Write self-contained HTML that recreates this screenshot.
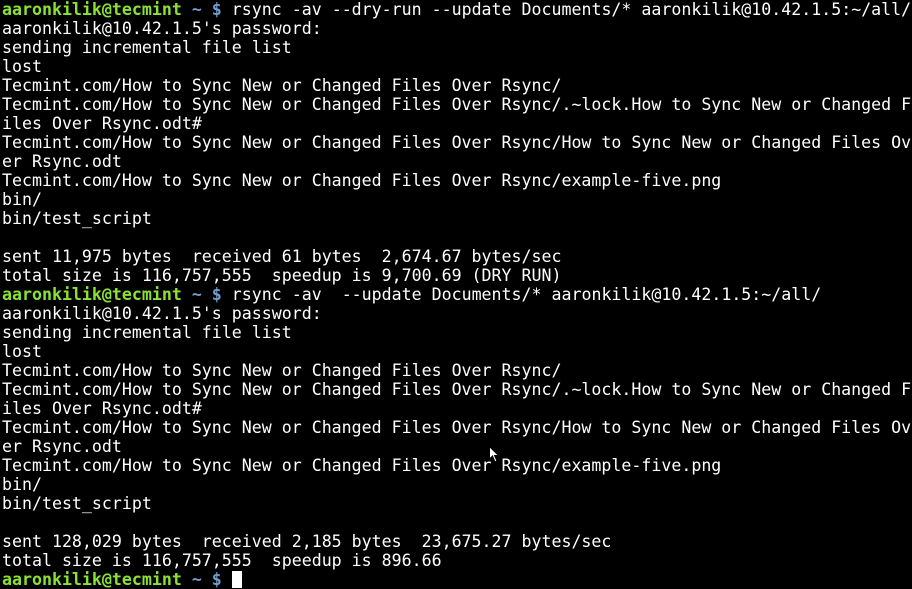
<!DOCTYPE html><html><head><style>
body{margin:0;background:#000;width:912px;height:589px;overflow:hidden;position:relative}
pre{margin:0;padding:0 0 0 2px;font-family:"DejaVu Sans Mono","Liberation Mono",monospace;font-size:16.6px;line-height:19px;color:#fff;white-space:pre;position:relative;top:0px}
.g{color:#8ae234;font-weight:bold}.b{color:#729fcf;font-weight:bold}
.c{display:inline-block;width:10px;height:17px;background:#fff;vertical-align:-3px}
svg{position:absolute;left:489px;top:446px}
</style></head><body><pre><span class="g">aaronkilik@tecmint</span> <span class="b">~ $</span> rsync -av --dry-run --update Documents/* aaronkilik@10.42.1.5:~/all/
aaronkilik@10.42.1.5's password:
sending incremental file list
lost
Tecmint.com/How to Sync New or Changed Files Over Rsync/
Tecmint.com/How to Sync New or Changed Files Over Rsync/.~lock.How to Sync New or Changed F
iles Over Rsync.odt#
Tecmint.com/How to Sync New or Changed Files Over Rsync/How to Sync New or Changed Files Ov
er Rsync.odt
Tecmint.com/How to Sync New or Changed Files Over Rsync/example-five.png
bin/
bin/test_script

sent 11,975 bytes  received 61 bytes  2,674.67 bytes/sec
total size is 116,757,555  speedup is 9,700.69 (DRY RUN)
<span class="g">aaronkilik@tecmint</span> <span class="b">~ $</span> rsync -av  --update Documents/* aaronkilik@10.42.1.5:~/all/
aaronkilik@10.42.1.5's password:
sending incremental file list
lost
Tecmint.com/How to Sync New or Changed Files Over Rsync/
Tecmint.com/How to Sync New or Changed Files Over Rsync/.~lock.How to Sync New or Changed F
iles Over Rsync.odt#
Tecmint.com/How to Sync New or Changed Files Over Rsync/How to Sync New or Changed Files Ov
er Rsync.odt
Tecmint.com/How to Sync New or Changed Files Over Rsync/example-five.png
bin/
bin/test_script

sent 128,029 bytes  received 2,185 bytes  23,675.27 bytes/sec
total size is 116,757,555  speedup is 896.66
<span class="g">aaronkilik@tecmint</span> <span class="b">~ $</span> <span class="c"></span></pre>
<svg width="12" height="18" viewBox="0 0 12 18"><path d="M0.5 0.5 L0.5 13 L3.5 10 L6 16 L8 15 L5.5 9.5 L9.5 9.5 Z" fill="#fff" stroke="#000" stroke-width="1"/></svg>
</body></html>
